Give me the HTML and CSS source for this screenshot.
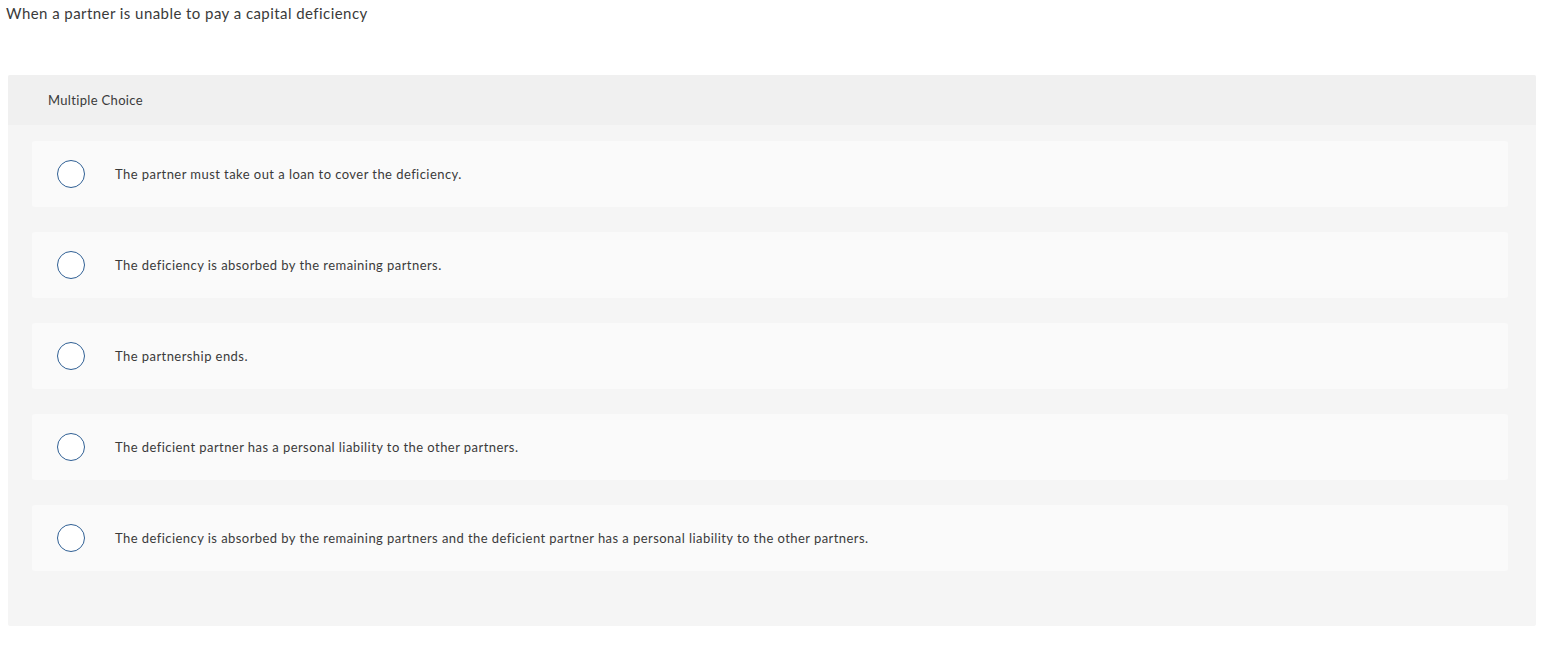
FILE: index.html
```html
<!DOCTYPE html>
<html>
<head>
<meta charset="utf-8">
<link rel="stylesheet" href="styles.css">
</head>
<body>
<p class="question">When a partner is unable to pay a capital deficiency</p>
<div class="mc">
  <div class="mc-head">Multiple Choice</div>
  <div class="mc-body">
    <div class="opt"><span class="radio"></span><span class="label">The partner must take out a loan to cover the deficiency.</span></div>
    <div class="opt"><span class="radio"></span><span class="label">The deficiency is absorbed by the remaining partners.</span></div>
    <div class="opt"><span class="radio"></span><span class="label">The partnership ends.</span></div>
    <div class="opt"><span class="radio"></span><span class="label">The deficient partner has a personal liability to the other partners.</span></div>
    <div class="opt"><span class="radio"></span><span class="label">The deficiency is absorbed by the remaining partners and the deficient partner has a personal liability to the other partners.</span></div>
  </div>
</div>
</body>
</html>
```
FILE: styles.css
```css
html, body { margin: 0; padding: 0; background: #fff; }
body { font-family: Lato, "Open Sans", Arial, sans-serif; color: #333; }
.question {
  margin: 0;
  padding: 4px 0 0 6px;
  font-size: 15px;
  line-height: 18px;
  letter-spacing: 0.44px;
  color: #3a3a3a;
  height: 71px;
}
.mc {
  margin: 0 30px 0 8px;
  background: #f5f5f5;
  border-radius: 2px;
  overflow: hidden;
}
.mc-head {
  background: #f0f0f0;
  height: 50px;
  display: flex;
  align-items: center;
  padding-left: 40px;
  font-size: 13px;
  letter-spacing: 0.33px;
  color: #3a3a3a;
}
.mc-body {
  padding: 16px 28px 55px 24px;
  display: flex;
  flex-direction: column;
  gap: 25px;
}
.opt {
  background: #fafafa;
  border-radius: 3px;
  height: 66px;
  display: flex;
  align-items: center;
  padding-left: 25px;
}
.radio {
  width: 26px;
  height: 26px;
  border: 1.5px solid #2f5f94;
  border-radius: 50%;
  background: #fff;
  flex: none;
}
.label {
  margin-left: 30px;
  font-size: 13px;
  letter-spacing: 0.44px;
  color: #3a3a3a;
}
```
